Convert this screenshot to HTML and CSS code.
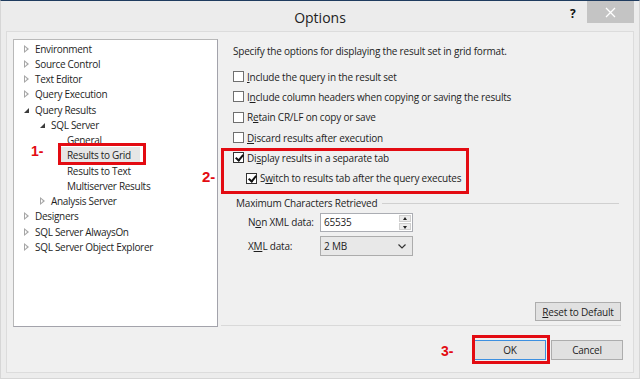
FILE: index.html
```html
<!DOCTYPE html>
<html lang="en">
<head>
    <meta charset="UTF-8">
    <title>Options</title>
<link rel="stylesheet" href="styles.css">
</head>
<body>
    <div class="window">
        <div class="titlebar">
            <span class="title">Options</span>
            <span class="help">?</span>
            <span class="close">
                <svg width="11" height="11" viewBox="0 0 11 11"><path d="M1 1 L10 10 M10 1 L1 10" stroke="#fff" stroke-width="1.3"/></svg>
            </span>
        </div>

        <div class="frame">
            <div class="main">
                <!-- Bal oldali fa -->
                <ul class="tree">
                    <li class="lvl0"><i class="arrow closed"></i>Environment</li>
                    <li class="lvl0"><i class="arrow closed"></i>Source Control</li>
                    <li class="lvl0"><i class="arrow closed"></i>Text Editor</li>
                    <li class="lvl0"><i class="arrow closed"></i>Query Execution</li>
                    <li class="lvl0"><i class="arrow open"></i>Query Results</li>
                    <li class="lvl1"><i class="arrow open"></i>SQL Server</li>
                    <li class="lvl2"><i class="arrow"></i>General</li>
                    <li class="lvl2"><i class="arrow"></i><span class="selected">Results to Grid</span></li>
                    <li class="lvl2"><i class="arrow"></i>Results to Text</li>
                    <li class="lvl2"><i class="arrow"></i>Multiserver Results</li>
                    <li class="lvl1"><i class="arrow closed"></i>Analysis Server</li>
                    <li class="lvl0"><i class="arrow closed"></i>Designers</li>
                    <li class="lvl0"><i class="arrow closed"></i>SQL Server AlwaysOn</li>
                    <li class="lvl0"><i class="arrow closed"></i>SQL Server Object Explorer</li>
                </ul>

                <!-- Jobb oldali panel -->
                <div class="panel">
                    <p class="desc">Specify the options for displaying the result set in grid format.</p>

                    <div class="check"><span class="box"></span><span><u>I</u>nclude the query in the result set</span></div>
                    <div class="check"><span class="box"></span><span>I<u>n</u>clude column headers when copying or saving the results</span></div>
                    <div class="check"><span class="box"></span><span>R<u>e</u>tain CR/LF on copy or save</span></div>
                    <div class="check"><span class="box"></span><span><u>D</u>iscard results after execution</span></div>
                    <div class="check"><span class="box checked"></span><span>Di<u>s</u>play results in a separate tab</span></div>
                    <div class="check sub"><span class="box checked"></span><span>S<u>w</u>itch to results tab after the query executes</span></div>

                    <div class="group-title"><span>Maximum Characters Retrieved</span></div>
                    <div class="field">
                        <label>N<u>o</u>n XML data:</label>
                        <div class="spin">
                            <span class="value">65535</span>
                            <span class="spin-btns">
                                <span class="up"></span>
                                <span class="down"></span>
                            </span>
                        </div>
                    </div>
                    <div class="field">
                        <label>X<u>M</u>L data:</label>
                        <div class="select">
                            <span class="value">2 MB</span>
                            <svg width="8" height="5" viewBox="0 0 8 5"><path d="M0.5 0.5 L4 4 L7.5 0.5" fill="none" stroke="#333" stroke-width="1.2"/></svg>
                        </div>
                    </div>

                    <div class="panel-foot">
                        <button class="btn reset"><u>R</u>eset to Default</button>
                    </div>
                </div>
            </div>

            <div class="footer">
                <button class="btn ok">OK</button>
                <button class="btn">Cancel</button>
            </div>
        </div>

        <!-- Piros jelolesek -->
        <span class="mark mark1">1-</span>
        <span class="redbox box1"></span>
        <span class="mark mark2">2-</span>
        <span class="redbox box2"></span>
        <span class="mark mark3">3-</span>
        <span class="redbox box3"></span>
    </div>
</body>
</html>
```

FILE: styles.css
```css
body {
    margin: 0;
    padding: 0;
    background-color: #ececec;
    font-family: "Open Sans", "Noto Sans", sans-serif;
    font-size: 10px;
    color: #1e1e1e;
}

.window {
    position: relative;
    width: 640px;
    height: 379px;
    box-sizing: border-box;
    border-top: 1px solid #1f3c5f;
    border-left: 1px solid #d6d6d6;
    border-right: 1px solid #d6d6d6;
    border-bottom: 1px solid #d6d6d6;
    background-color: #ececec;
}

.titlebar {
    position: relative;
    height: 30px;
    display: flex;
    justify-content: center;
    align-items: center;
}

.title {
    font-size: 14px;
    color: #222;
    margin-top: 3px;
}

.help {
    position: absolute;
    left: 569px;
    top: 4px;
    font-size: 12px;
    font-weight: bold;
    color: #111;
}

.close {
    position: absolute;
    left: 586px;
    top: 0;
    width: 47px;
    height: 22px;
    background-color: #c4c4c4;
    display: flex;
    align-items: center;
    justify-content: center;
}

.frame {
    margin: 0 5px 0 5px;
    height: 342px;
    box-sizing: border-box;
    border: 1px solid #dcdcdc;
    background-color: #f0f0f0;
    padding: 7px 10px 0 6px;
}

.main {
    display: flex;
}

/* fa */
.tree {
    list-style: none;
    margin: 0;
    padding: 1px 0 0 0;
    width: 205px;
    height: 288px;
    box-sizing: border-box;
    background-color: white;
    border: 1px solid #b9b9b9;
    border-right-color: #a3a3ab;
    border-bottom-color: #a3a3ab;
    letter-spacing: -0.3px;
}

.tree li {
    display: flex;
    align-items: center;
    height: 15.25px;
    white-space: nowrap;
    color: #1e1e1e;
}

.tree li.lvl0 { padding-left: 10px; }
.tree li.lvl1 { padding-left: 26px; }
.tree li.lvl2 { padding-left: 42px; }

.arrow {
    display: inline-block;
    width: 11px;
    height: 8px;
    flex-shrink: 0;
    position: relative;
}

.arrow.closed::before {
    content: "";
    position: absolute;
    left: 0;
    top: 0;
    border-left: 5px solid #a6a6a6;
    border-top: 4px solid transparent;
    border-bottom: 4px solid transparent;
}

.arrow.closed::after {
    content: "";
    position: absolute;
    left: 1px;
    top: 2px;
    border-left: 2.5px solid white;
    border-top: 2px solid transparent;
    border-bottom: 2px solid transparent;
}

.arrow.open::before {
    content: "";
    position: absolute;
    left: 0;
    top: 2px;
    border-right: 5px solid #3c3c3c;
    border-top: 5px solid transparent;
}

.selected {
    background-color: #e6e6e6;
    padding: 1px 9px 1px 7px;
    margin-left: -7px;
}

/* panel */
.panel {
    margin-left: 3px;
    width: 400px;
    height: 287px;
    box-sizing: border-box;
    border-bottom: 1px solid #d9d9d9;
    padding: 5px 0 0 12px;
    display: flex;
    flex-direction: column;
    letter-spacing: -0.2px;
}

.desc {
    margin: 0 0 8.5px 0;
    line-height: 14px;
}

.check {
    display: flex;
    align-items: center;
    height: 20.3px;
    gap: 3px;
}

.check.sub {
    padding-left: 13px;
}

.box {
    width: 11px;
    height: 11px;
    box-sizing: border-box;
    border: 1px solid #6f6f6f;
    background-color: white;
    position: relative;
}

.box.checked {
    border-color: #333;
}

.box.checked::after {
    content: "";
    position: absolute;
    left: 3px;
    top: 0px;
    width: 3px;
    height: 6px;
    border-right: 2px solid #111;
    border-bottom: 2px solid #111;
    transform: rotate(40deg);
}

.group-title {
    display: flex;
    align-items: center;
    margin: 8px 2px 2px 3px;
    line-height: 14px;
}

.group-title::after {
    content: "";
    flex: 1;
    height: 1px;
    background-color: #d0d0d0;
    margin-left: 5px;
}

.field {
    display: flex;
    align-items: center;
    height: 20px;
    margin-bottom: 4px;
    padding-left: 15px;
}

.field label {
    width: 72px;
}

.spin, .select {
    width: 93px;
    height: 19px;
    box-sizing: border-box;
    border: 1px solid #abadb3;
    background-color: white;
    display: flex;
    align-items: center;
    justify-content: space-between;
    padding-left: 3px;
}

.select {
    height: 20px;
    background-color: #e8e8e8;
    border-color: #acacac;
    padding-right: 6px;
}

.spin-btns {
    display: flex;
    flex-direction: column;
    width: 12px;
    height: 15px;
    margin-right: 1px;
    gap: 1px;
}

.spin-btns span {
    flex: 1;
    background-color: #ececec;
    border: 1px solid #cfcfcf;
    position: relative;
}

.spin-btns .up::after, .spin-btns .down::after {
    content: "";
    position: absolute;
    left: 3px;
    top: 2px;
    border-left: 2.5px solid transparent;
    border-right: 2.5px solid transparent;
}

.spin-btns .up::after { border-bottom: 3px solid #222; top: 1px; }
.spin-btns .down::after { border-top: 3px solid #222; top: 2px; }

.panel-foot {
    margin-top: auto;
    display: flex;
    justify-content: flex-end;
    padding-bottom: 4px;
}

.btn {
    font-family: inherit;
    font-size: 10px;
    color: #1e1e1e;
    background-color: #e1e1e1;
    border: 1px solid #adadad;
    height: 19px;
    padding: 0;
    margin: 0;
    letter-spacing: -0.2px;
}

.reset {
    width: 86px;
}

.footer {
    display: flex;
    justify-content: flex-end;
    gap: 5px;
    margin-top: 13px;
}

.footer .btn {
    width: 72px;
    height: 20px;
}

.footer .ok {
    border-color: #3c8fe0;
}

/* jelolesek */
.mark {
    position: absolute;
    color: #e30b12;
    font-family: "Liberation Sans", Arial, sans-serif;
    font-weight: bold;
    font-size: 14px;
    line-height: 14px;
}

.mark1 { left: 30px; top: 143px; }
.mark2 { left: 201px; top: 169px; font-size: 15px; }
.mark3 { left: 440px; top: 343px; }

.redbox {
    position: absolute;
    border: 3px solid #e30b12;
    box-sizing: border-box;
}

.box1 { left: 57px; top: 142px; width: 88px; height: 22px; }
.box2 { left: 220px; top: 147px; width: 248px; height: 46px; }
.box3 { left: 471px; top: 334px; width: 78px; height: 29px; }
```
